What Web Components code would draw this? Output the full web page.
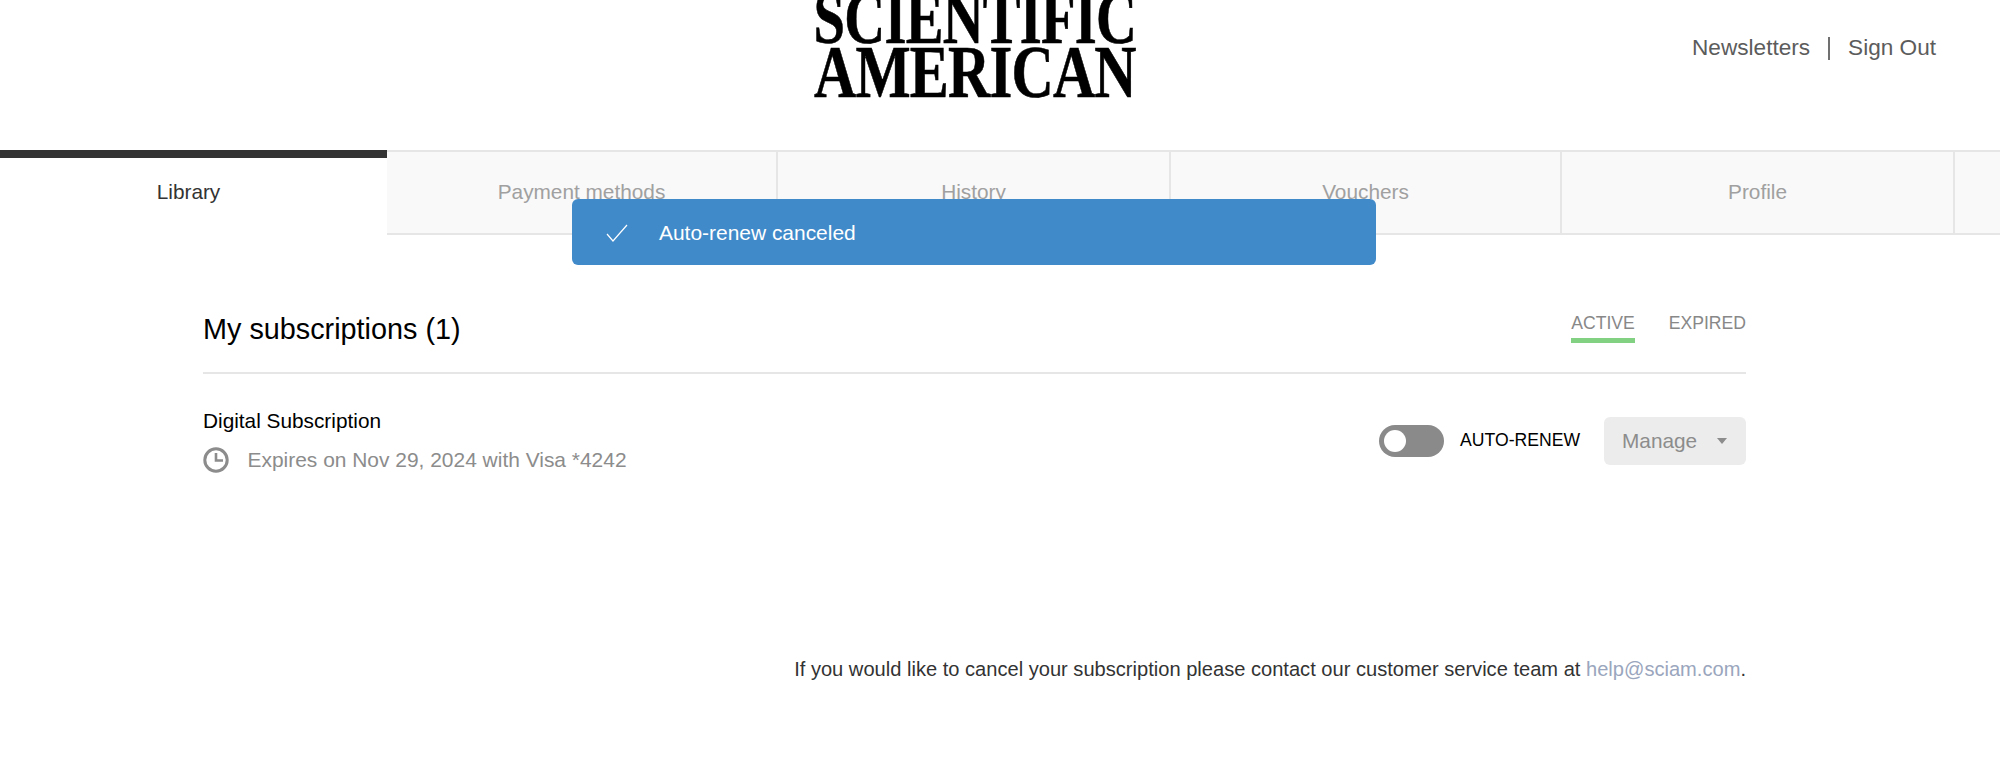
<!DOCTYPE html>
<html>
<head>
<meta charset="utf-8">
<title>My subscriptions</title>
<style>
    html, body { margin: 0; padding: 0; background: #fff; }
    body { font-family: "Liberation Sans", Arial, sans-serif; width: 2000px; height: 764px; overflow: hidden; }
</style>
</head>
<body>
<site-header></site-header>
<tab-bar>
    <tab-item active style="width: 387px">Library</tab-item>
    <tab-item style="width: 391px">Payment methods</tab-item>
    <tab-item style="width: 393px">History</tab-item>
    <tab-item style="width: 391px">Vouchers</tab-item>
    <tab-item style="width: 393px">Profile</tab-item>
    <tab-item style="flex: 1"></tab-item>
</tab-bar>
<toast-message>Auto-renew canceled</toast-message>
<subscription-panel></subscription-panel>
<script>
class SiteHeader extends HTMLElement {
    constructor() {
        super();
        this.attachShadow({ mode: 'open' });
        this.shadowRoot.innerHTML = `
            <style>
                :host { display: flex; height: 150px; overflow: hidden; position: relative; justify-content: center; }
                .logo { margin-top: -9px; margin-left: -51px; font-family: "Liberation Serif", serif; font-weight: 700; color: #000; font-size: 74px; line-height: 54px; text-align: center; white-space: nowrap; -webkit-text-stroke: 0.6px #000; }
                .logo span { display: block; transform-origin: center; }
                .l1 { transform: scaleX(0.765); letter-spacing: -1px; }
                .l2 { transform: scaleX(0.79); letter-spacing: -1px; }
                nav { position: absolute; right: 64px; top: 33px; display: flex; align-items: center; color: #5c5c5c; font-size: 22.6px; line-height: 30px; }
                i { display: block; width: 2px; height: 23px; background: #707070; margin: 0 18px; }
            </style>
            <div class="logo"><span class="l1">SCIENTIFIC</span><span class="l2">AMERICAN</span></div>
            <nav><span>Newsletters</span><i></i><span>Sign Out</span></nav>`;
    }
}
customElements.define('site-header', SiteHeader);

class TabBar extends HTMLElement {
    constructor() {
        super();
        this.attachShadow({ mode: 'open' });
        this.shadowRoot.innerHTML = `
            <style>:host { display: flex; height: 85px; }</style>
            <slot></slot>`;
    }
}
customElements.define('tab-bar', TabBar);

class TabItem extends HTMLElement {
    constructor() {
        super();
        this.attachShadow({ mode: 'open' });
        this.shadowRoot.innerHTML = `
            <style>
                :host { display: flex; box-sizing: border-box; align-items: center; justify-content: center; height: 85px; background: #f9f9f9; color: #a0a0a0; font-size: 20.8px; border-top: 2px solid #e6e6e6; border-bottom: 2px solid #e6e6e6; border-right: 2px solid #e6e6e6; padding-bottom: 2px; }
                :host([active]) { background: #fff; color: #333; border-top: 8px solid #333; border-bottom: 0; border-right: 0; padding: 0 10px 10px 0; }
                :host(:last-child) { border-right: 0; }
            </style>
            <slot></slot>`;
    }
}
customElements.define('tab-item', TabItem);

class ToastMessage extends HTMLElement {
    constructor() {
        super();
        this.attachShadow({ mode: 'open' });
        this.shadowRoot.innerHTML = `
            <style>
                :host { position: absolute; left: 572px; top: 199px; width: 804px; height: 66px; box-sizing: border-box; padding: 1px 0 0 34px; display: flex; align-items: center; background: #408aca; border-radius: 6px; color: #fff; font-size: 20.95px; }
                svg { width: 22px; height: 20px; margin-right: 31px; }
            </style>
            <svg viewBox="0 0 22 20" fill="none" stroke="#fff" stroke-width="1.2"><path d="M1 11l6 7L21 2"/></svg>
            <slot></slot>`;
    }
}
customElements.define('toast-message', ToastMessage);

class SubscriptionPanel extends HTMLElement {
    constructor() {
        super();
        this.attachShadow({ mode: 'open' });
        this.shadowRoot.innerHTML = `
            <style>
                :host { display: block; padding: 65px 254px 0 203px; color: #000; }
                .head { display: flex; justify-content: space-between; height: 72px; border-bottom: 2px solid #e6e6e6; }
                h2 { margin: 0; font-weight: 400; font-size: 28.8px; line-height: 32px; padding-top: 13px; }
                .filters { display: flex; gap: 34px; font-size: 17.6px; color: #888; }
                .filters span { display: block; line-height: 22px; padding-top: 12px; height: 26px; box-sizing: content-box; }
                .filters .on { box-sizing: border-box; height: 43px; border-bottom: 5px solid #82d182; }
                .row { display: flex; justify-content: space-between; align-items: center; padding-top: 34px; }
                .name { font-size: 20.8px; line-height: 26px; }
                .exp { display: flex; align-items: center; gap: 19px; margin-top: 13px; color: #8c8c8c; font-size: 20.95px; line-height: 26px; }
                .exp svg { width: 26px; height: 26px; margin-left: -0.5px; }
                .actions { display: flex; align-items: center; }
                .toggle { width: 65px; height: 32px; border-radius: 16px; background: #8a8a8a; position: relative; margin-right: 16px; }
                .toggle::after { content: ""; position: absolute; left: 5px; top: 5px; width: 22px; height: 22px; border-radius: 50%; background: #fff; }
                .lbl { font-size: 17.6px; margin-right: 24px; }
                .manage { width: 142px; height: 48px; box-sizing: border-box; padding-left: 18px; background: #ececec; border-radius: 6px; display: flex; align-items: center; color: #8c8c8c; font-size: 20.8px; }
                .manage b { width: 0; height: 0; border-left: 5px solid transparent; border-right: 5px solid transparent; border-top: 6px solid #8c8c8c; margin-left: 20px; }
                .note { margin-top: 185px; text-align: right; font-size: 20.1px; color: #333; }
                .note a { color: #9aa6bd; text-decoration: none; }
            </style>
            <div class="head">
                <h2>My subscriptions (1)</h2>
                <div class="filters"><span class="on">ACTIVE</span><span>EXPIRED</span></div>
            </div>
            <div class="row">
                <div>
                    <div class="name">Digital Subscription</div>
                    <div class="exp">
                        <svg viewBox="0 0 26 26" fill="none" stroke="#8c8c8c" stroke-width="3"><circle cx="13" cy="13" r="11.2"/><path d="M13 6v7.5h7" stroke-width="2.6"/></svg>
                        <span>Expires on Nov 29, 2024 with Visa *4242</span>
                    </div>
                </div>
                <div class="actions">
                    <div class="toggle"></div>
                    <span class="lbl">AUTO-RENEW</span>
                    <div class="manage">Manage<b></b></div>
                </div>
            </div>
            <div class="note">If you would like to cancel your subscription please contact our customer service team at <a>help@sciam.com</a>.</div>`;
    }
}
customElements.define('subscription-panel', SubscriptionPanel);
</script>
</body>
</html>
